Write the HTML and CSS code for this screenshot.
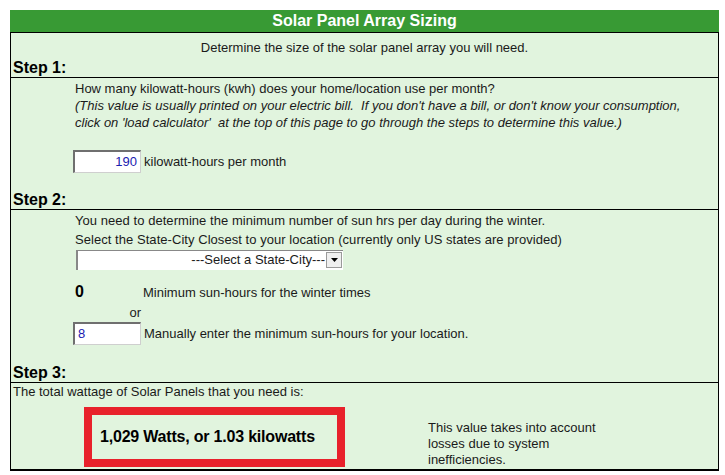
FILE: index.html
```html
<!DOCTYPE html>
<html>
<head>
<meta charset="utf-8">
<link rel="stylesheet" href="styles.css">
</head>
<body>
<div class="panel">
  <div class="title">Solar Panel Array Sizing</div>
  <div class="cell intro">
    <div class="lead">Determine the size of the solar panel array you will need.</div>
    <div class="step">Step 1:</div>
  </div>
  <div class="cell s1">
    <div class="indent">
      <div class="line">How many kilowatt-hours (kwh) does your home/location use per month?</div>
      <div class="line note">(This value is usually printed on your electric bill.&nbsp; If you don't have a bill, or don't know your consumption,</div>
      <div class="line note">click on 'load calculator'&nbsp; at the top of this page to go through the steps to determine this value.)</div>
      <div class="kwh-row">
        <div class="field right">190</div>
        <span class="after">kilowatt-hours per month</span>
      </div>
    </div>
    <div class="step">Step 2:</div>
  </div>
  <div class="cell s2">
    <div class="indent">
      <div class="line">You need to determine the minimum number of sun hrs per day during the winter.</div>
      <div class="line">Select the State-City Closest to your location (currently only US states are provided)</div>
      <div class="select"><span class="sel-text">---Select a State-City---</span><span class="sel-btn"><svg width="7" height="4" viewBox="0 0 7 4"><path d="M0 0h7L3.5 4z" fill="#000"/></svg></span></div>
      <div class="sun-row">
        <span class="zero">0</span>
        <span class="after">Minimum sun-hours for the winter times</span>
      </div>
      <div class="or">or</div>
      <div class="manual-row">
        <div class="field left">8</div>
        <span class="after">Manually enter the minimum sun-hours for your location.</span>
      </div>
    </div>
    <div class="step">Step 3:</div>
  </div>
  <div class="cell s3">
    <div class="total">The total wattage of Solar Panels that you need is:</div>
    <div class="result-row">
      <div class="result">1,029 Watts, or 1.03 kilowatts</div>
      <div class="explain">This value takes into account<br>losses due to system<br>inefficiencies.</div>
    </div>
  </div>
</div>
</body>
</html>
```

FILE: styles.css
```css
html, body {
  margin: 0;
  padding: 0;
  background: #ffffff;
}

.panel {
  margin: 10px 0 0 10px;
  width: 707px;
  border: 1px solid #000;
  border-top: none;
  background: #e1f4de;
  font-family: "Liberation Sans", Arial, sans-serif;
  font-size: 13px;
  color: #1a1a1a;
}

.title {
  height: 22px;
  line-height: 22px;
  background: #389a34;
  color: #fff;
  font-weight: bold;
  font-size: 16px;
  text-align: center;
  border-bottom: 1px solid #000;
  margin: 0 -1px;
  padding: 0 1px;
}

.cell {
  border-bottom: 1px solid #000;
}

.intro {
  height: 44px;
  display: flex;
  flex-direction: column;
  justify-content: space-between;
}

.lead {
  text-align: center;
  line-height: 16px;
  padding-top: 7px;
}

.step {
  font-weight: bold;
  font-size: 16px;
  line-height: 18px;
  padding-left: 2px;
  color: #000;
}

.s1 {
  height: 131px;
  display: flex;
  flex-direction: column;
  justify-content: space-between;
}

.indent {
  padding-left: 64px;
  padding-top: 2px;
}

.line {
  line-height: 17px;
}

.note {
  font-style: italic;
}

.kwh-row, .manual-row {
  display: flex;
  align-items: center;
  margin-left: -2px;
}

.kwh-row {
  margin-top: 19px;
}

.field {
  box-sizing: border-box;
  width: 68px;
  height: 23px;
  background: #fff;
  border-top: 2px solid #6f6f6f;
  border-left: 2px solid #6f6f6f;
  border-right: 1px solid #cfcfcf;
  border-bottom: 1px solid #cfcfcf;
  color: #1a20b0;
  line-height: 19px;
  padding: 0 3px;
}

.field.right { text-align: right; }
.field.left { text-align: left; }

.after {
  margin-left: 3px;
}

.s2 {
  height: 172px;
  display: flex;
  flex-direction: column;
  justify-content: space-between;
}

.s2 .indent {
  padding-top: 1px;
}

.s2 .line {
  line-height: 19px;
  letter-spacing: 0.05px;
}

.select {
  display: flex;
  width: 267px;
  height: 20px;
  box-sizing: border-box;
  margin-left: 1px;
  margin-top: 1px;
  background: #fff;
  border-top: 1px solid #888;
  border-left: 2px solid #888;
}

.sel-text {
  flex: 1;
  text-align: right;
  line-height: 18px;
  padding-right: 1px;
}

.sel-btn {
  width: 16px;
  height: 16px;
  margin: 1px 1px 0 0;
  box-sizing: border-box;
  border: 1px solid #9a9a9a;
  background: #efefef;
  display: flex;
  align-items: center;
  justify-content: center;
}

.sun-row {
  display: flex;
  align-items: center;
  margin-top: 13px;
  height: 18px;
}

.zero {
  font-weight: bold;
  font-size: 16px;
  width: 65px;
  color: #000;
}

.sun-row .after {
  margin-left: 3px;
}

.or {
  width: 66px;
  text-align: right;
  line-height: 16px;
  margin-top: 4px;
}

.manual-row {
  margin-top: 1px;
}

.s3 {
  height: 86px;
}

.total {
  line-height: 17px;
  padding-left: 2px;
}

.result-row {
  display: flex;
  align-items: flex-start;
  margin-top: 7px;
}

.result {
  box-sizing: border-box;
  width: 261px;
  height: 60px;
  margin-left: 73px;
  border: 8px solid #e8212b;
  background: #e1f4de;
  font-weight: bold;
  font-size: 16px;
  letter-spacing: -0.2px;
  line-height: 44px;
  padding-left: 8px;
  color: #000;
}

.explain {
  margin-left: 83px;
  margin-top: 13px;
  line-height: 16px;
  font-size: 13px;
}
```
